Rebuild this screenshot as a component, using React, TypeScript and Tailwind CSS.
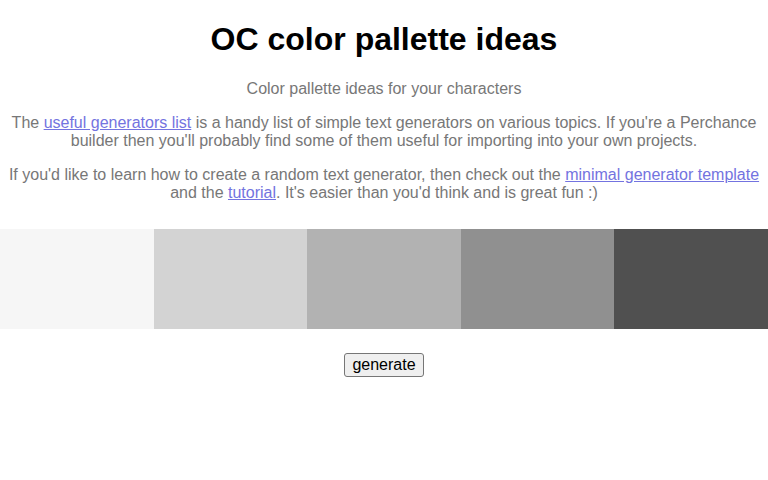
export default function App() {
  const colors = ["#f6f6f6", "#d3d3d3", "#b2b2b2", "#909090", "#505050"];
  return (
    <div className="min-h-[480px] bg-white text-center" style={{ fontFamily: '"Liberation Sans", Arial, sans-serif' }}>
      <h1 className="pt-[21px] pb-[22px] text-[32px] font-bold leading-[37px] text-black">OC color pallette ideas</h1>
      <div className="px-2 text-[16px] leading-[18px] text-[#777777]">
        <p>Color pallette ideas for your characters</p>
        <p className="mt-4">
          The <a href="#" className="text-[#7373e0] underline">useful generators list</a> is a handy list of simple text generators on various topics. If you're a Perchance builder then you'll probably find some of them useful for importing into your own projects.
        </p>
        <p className="mt-4">
          If you'd like to learn how to create a random text generator, then check out the <a href="#" className="text-[#7373e0] underline">minimal generator template</a> and the <a href="#" className="text-[#7373e0] underline">tutorial</a>. It's easier than you'd think and is great fun :)
        </p>
      </div>
      <div className="mt-[27px] flex h-[100px] w-full">
        {colors.map((c) => (
          <div key={c} className="h-full flex-1" style={{ backgroundColor: c }} />
        ))}
      </div>
      <div className="mt-6 flex justify-center">
        <button className="h-6 rounded-[3px] border border-[#767676] bg-[#efefef] px-[7px] text-[16px] leading-[20px] text-black">generate</button>
      </div>
    </div>
  );
}
